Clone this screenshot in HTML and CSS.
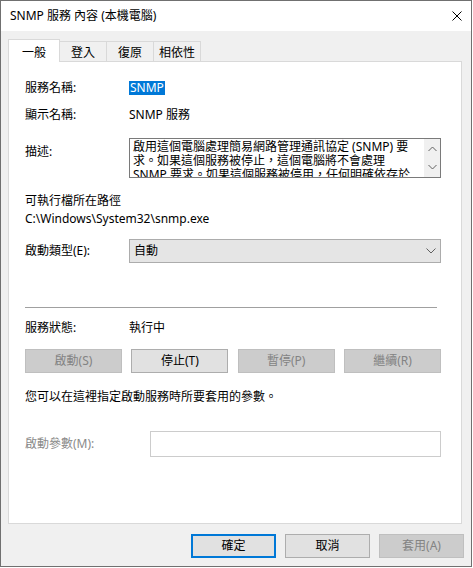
FILE: index.html
```html
<!DOCTYPE html>
<html lang="zh-Hant">
<head>
<meta charset="utf-8">
<title>SNMP 服務 內容 (本機電腦)</title>
<link rel="stylesheet" href="styles.css">
</head>
<body>
<div class="window">
  <div class="titlebar">
    <span class="title">SNMP 服務 內容 (本機電腦)</span>
    <svg class="close" width="10" height="10" viewBox="0 0 10 10"><path d="M0.5 0.5L9.5 9.5M9.5 0.5L0.5 9.5" stroke="#000" stroke-width="1" fill="none"/></svg>
  </div>
  <div class="client">
    <div class="tabs">
      <div class="tab active">一般</div>
      <div class="tab">登入</div>
      <div class="tab">復原</div>
      <div class="tab">相依性</div>
    </div>
    <div class="panel">
      <div class="row r-name"><span class="label">服務名稱:</span><span class="sel">SNMP</span></div>
      <div class="row r-display"><span class="label">顯示名稱:</span><span>SNMP 服務</span></div>
      <div class="row r-desc">
        <span class="label desc-label">描述:</span>
        <div class="textbox">
          <div class="tb-text">啟用這個電腦處理簡易網路管理通訊協定 (SNMP) 要<br>求。如果這個服務被停止，這個電腦將不會處理<br>SNMP 要求。如果這個服務被停用，任何明確依存於</div>
          <div class="vscroll">
            <svg width="9" height="6" viewBox="0 0 9 6"><path d="M0.5 5L4.5 1L8.5 5" stroke="#606060" stroke-width="1" fill="none"/></svg>
            <svg width="9" height="6" viewBox="0 0 9 6"><path d="M0.5 1L4.5 5L8.5 1" stroke="#606060" stroke-width="1" fill="none"/></svg>
          </div>
        </div>
      </div>
      <div class="line r-pathlabel">可執行檔所在路徑</div>
      <div class="line r-path">C:\Windows\System32\snmp.exe</div>
      <div class="row r-startup">
        <span class="label">啟動類型(E):</span>
        <div class="combo"><span>自動</span><svg width="10" height="6" viewBox="0 0 10 6"><path d="M0.5 0.5L5 5L9.5 0.5" stroke="#606060" stroke-width="1" fill="none"/></svg></div>
      </div>
      <div class="divider"></div>
      <div class="row r-status"><span class="label">服務狀態:</span><span>執行中</span></div>
      <div class="svc-buttons">
        <button class="btn" disabled>啟動(S)</button>
        <button class="btn">停止(T)</button>
        <button class="btn" disabled>暫停(P)</button>
        <button class="btn" disabled>繼續(R)</button>
      </div>
      <div class="line hint">您可以在這裡指定啟動服務時所要套用的參數。</div>
      <div class="row r-param">
        <span class="label wide dim">啟動參數(M):</span>
        <div class="param-input"></div>
      </div>
    </div>
    <div class="footer">
      <button class="btn fbtn default">確定</button>
      <button class="btn fbtn">取消</button>
      <button class="btn fbtn" disabled>套用(A)</button>
    </div>
  </div>
</div>
</body>
</html>
```

FILE: styles.css
```css
* { box-sizing: border-box; }
html, body { margin: 0; padding: 0; background: #ffffff; }
body {
  font-family: "Noto Sans", "Noto Sans CJK TC", sans-serif;
  font-size: 12px;
  color: #000;
}
.window {
  width: 472px;
  height: 567px;
  border: 1px solid #707070;
  display: flex;
  flex-direction: column;
  background: #f0f0f0;
}
.titlebar {
  height: 30px;
  flex: none;
  background: #fff;
  display: flex;
  align-items: center;
  justify-content: space-between;
  padding: 0 9px 0 9px;
}
.title { line-height: 16px; }
.close { display: block; }
.client {
  flex: 1;
  padding: 8px 7px 0 7px;
}
.tabs {
  display: flex;
  align-items: flex-end;
  height: 22px;
}
.tab {
  width: 47px;
  text-align: center;
  line-height: 16px;
  border: 1px solid #d9d9d9;
  border-bottom: none;
  border-left: none;
  padding: 3px 0 0;
  height: 20px;
  background: #f0f0f0;
}
.tab.active {
  width: 52px;
  height: 23px;
  border-left: 1px solid #d9d9d9;
  padding: 5px 0 1px;
  background: #fff;
  margin-bottom: -1px;
  position: relative;
  z-index: 1;
}
.panel {
  width: 454px;
  height: 463px;
  background: #fff;
  border: 1px solid #d9d9d9;
  padding: 18px 20px 0 16px;
}
.row { display: flex; align-items: center; }
.line { line-height: 16px; height: 16px; }
.row > span { line-height: 16px; }
.label { width: 104px; flex: none; }
.label.wide { width: 125px; }
.dim { color: #8a8a8a; }
.sel {
  background: #0078d7;
  color: #fff;
  padding: 0 1px;
  height: 14px;
  line-height: 14px !important;
}
.r-display { margin-top: 11px; }
.r-desc { margin-top: 15px; align-items: flex-start; }
.desc-label { padding-top: 6px; }
.textbox {
  flex: 1;
  height: 40px;
  border: 1px solid #7a7a7a;
  display: flex;
  overflow: hidden;
}
.tb-text {
  flex: 1;
  white-space: nowrap;
  overflow: hidden;
  line-height: 14px;
  padding: 1px 0 0 3px;
}
.vscroll {
  width: 16px;
  flex: none;
  background: #f0f0f0;
  display: flex;
  flex-direction: column;
  justify-content: space-between;
  align-items: center;
  padding: 7px 0 7px;
}
.vscroll svg { display: block; }
.r-pathlabel { margin-top: 15px; }
.r-path { margin-top: 2px; }
.r-startup { margin-top: 12px; }
.combo {
  flex: 1;
  height: 24px;
  background: #e5e5e5;
  border: 1px solid #acacac;
  display: flex;
  align-items: center;
  justify-content: space-between;
  padding: 0 4px 0 4px;
  line-height: 16px;
}
.combo svg { display: block; }
.divider {
  margin-top: 44px;
  margin-right: 4px;
  height: 1px;
  background: #a0a0a0;
}
.r-status { margin-top: 12px; }
.svc-buttons {
  margin-top: 13px;
  display: flex;
  justify-content: space-between;
}
.btn {
  font: inherit;
  color: #000;
  width: 97px;
  height: 24px;
  padding: 0;
  margin: 0;
  line-height: 16px;
  background: #e1e1e1;
  border: 1px solid #adadad;
  border-radius: 0;
}
.btn:disabled {
  background: #cccccc;
  border-color: #bfbfbf;
  color: #838383;
}
.hint { margin-top: 16px; }
.r-param { margin-top: 26px; }
.param-input {
  flex: 1;
  height: 26px;
  background: #fff;
  border: 1px solid #cccccc;
}
.footer {
  display: flex;
  justify-content: flex-end;
  gap: 9px;
  padding: 10px 0 0 0;
}
.fbtn { width: 85px; height: 24px; }
.fbtn.default { border: 2px solid #0078d7; }
```
